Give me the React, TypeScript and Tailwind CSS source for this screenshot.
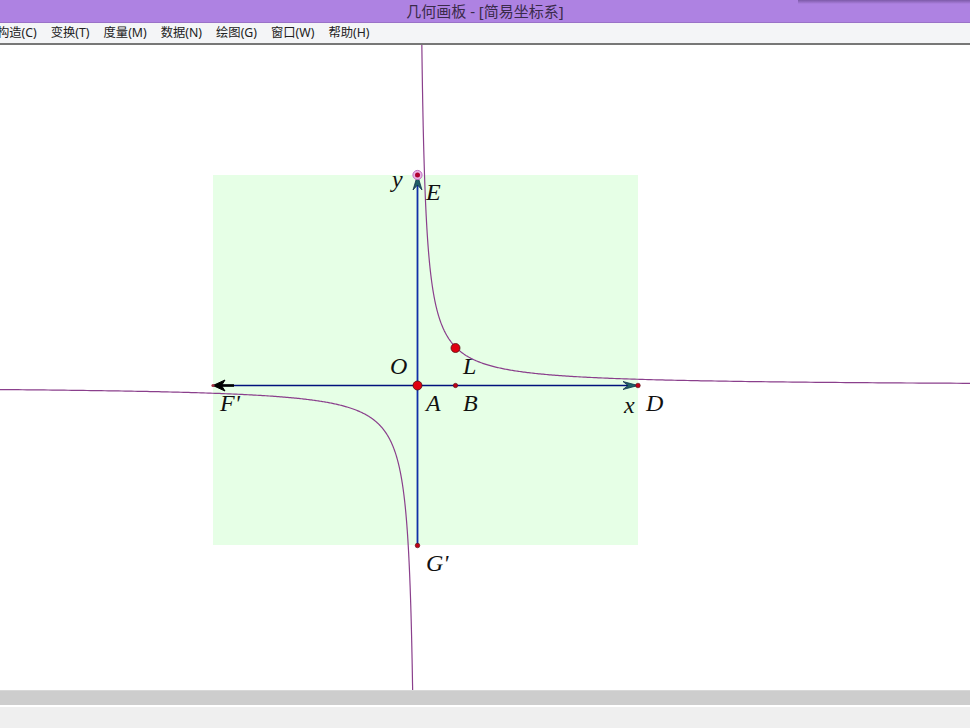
import React from 'react'

const menus = ['变换(T)', '度量(M)', '数据(N)', '绘图(G)', '窗口(W)', '帮助(H)']

// hyperbola (x - 417.5)(386 - y) = 1480, one path for each branch
function branch(from: number, to: number) {
  const pts: string[] = []
  const steps = 400
  for (let i = 0; i <= steps; i++) {
    const t = i / steps
    const dx = from * Math.pow(to / from, t)
    pts.push(`${(417.5 + dx).toFixed(2)},${(386 - 1480 / dx).toFixed(2)}`)
  }
  return 'M' + pts.join(' L')
}

const labels = [
  { text: 'y', className: 'left-[392px] top-[120px]' },
  { text: 'E', className: 'left-[426px] top-[133px]' },
  { text: 'O', className: 'left-[390px] top-[307px]' },
  { text: 'L', className: 'left-[463px] top-[307px]' },
  { text: 'A', className: 'left-[426px] top-[344px]' },
  { text: 'B', className: 'left-[463px] top-[344px]' },
  { text: 'x', className: 'left-[624px] top-[346px]' },
  { text: 'D', className: 'left-[646px] top-[344px]' },
  { text: "F'", className: 'left-[220px] top-[344px]' },
  { text: "G'", className: 'left-[426px] top-[504px]' },
]

function Sketch() {
  return (
    <svg className="absolute inset-0 h-[645px] w-[970px]" viewBox="0 45 970 645">
      <rect x="213" y="175" width="425" height="370" fill="#e6ffe6" />
      <path d={branch(4.3, 552.5)} fill="none" stroke="#8a3f8c" strokeWidth="1.2" />
      <path d={branch(-417.5, -4.87)} fill="none" stroke="#8a3f8c" strokeWidth="1.2" />
      {/* axes */}
      <path d="M213 385.5H638" stroke="#00107c" strokeWidth="1.5" />
      <path d="M417.5 175V545" stroke="#1030a8" strokeWidth="1.8" />
      {/* arrow heads */}
      <path d="M638 385.5L623 381.5L628 385.5L623 389.5Z" fill="#1f5f66" stroke="#10304a" strokeWidth="0.8" />
      <path d="M417.5 175L413 190L417.5 185L422 190Z" fill="#1f5f66" stroke="#10304a" strokeWidth="0.8" />
      <path d="M234 385.5H222" stroke="#000" strokeWidth="2.6" />
      <path d="M213 385.5L225 380L221.5 385.5L225 391Z" fill="#000" stroke="#000" strokeWidth="1" />
      {/* points */}
      <circle cx="417.5" cy="175" r="4.6" fill="#eab4e6" stroke="#c070c0" strokeWidth="1" />
      <circle cx="417.5" cy="175" r="2.5" fill="#b00030" />
      <circle cx="213" cy="385.5" r="1.6" fill="#a03040" />
      <circle cx="638" cy="385.5" r="2.3" fill="#c00018" stroke="#501010" strokeWidth="0.6" />
      <circle cx="417.5" cy="545.5" r="2.3" fill="#c00018" stroke="#501010" strokeWidth="0.6" />
      <circle cx="455.5" cy="385.5" r="2.2" fill="#c00018" stroke="#501010" strokeWidth="0.6" />
      <circle cx="417.5" cy="385.5" r="4.5" fill="#e00010" stroke="#501010" strokeWidth="0.8" />
      <circle cx="455.5" cy="348" r="4.5" fill="#e00010" stroke="#501010" strokeWidth="0.8" />
    </svg>
  )
}

export default function App() {
  return (
    <div className="flex h-[728px] w-[970px] flex-col overflow-hidden bg-white font-['Noto_Sans','Noto_Sans_CJK_SC',sans-serif]">
      {/* Title bar */}
      <div className="relative flex h-[23px] shrink-0 items-center justify-center border-b border-[#9a72c8] bg-[#ae82e2] text-[15px] text-[#3a2a4a]">
        几何画板 - [简易坐标系]
        <div className="absolute right-0 top-0 h-[4px] w-[172px] bg-gradient-to-b from-[#7d5aa8] to-[#ae82e2]" />
      </div>

      {/* Menu bar */}
      <div className="flex h-[22px] shrink-0 items-center gap-[14px] overflow-hidden border-b-2 border-[#777] bg-[#f4f5f7] text-[12.3px] text-[#222]">
        <span className="-ml-[3px] whitespace-nowrap">构造(C)</span>
        {menus.map((m) => (
          <span key={m} className="whitespace-nowrap">{m}</span>
        ))}
      </div>

      {/* Canvas */}
      <div className="relative h-[645px] shrink-0 bg-white">
        <Sketch />
        {labels.map((l) => (
          <span
            key={l.text}
            className={`absolute font-['Liberation_Serif',serif] text-[24px] italic leading-[28px] text-[#111] ${l.className}`}
          >
            {l.text}
          </span>
        ))}
      </div>

      {/* Scroll bar */}
      <div className="h-[15px] shrink-0 border-t border-[#d8d8d8] bg-[#cdcdcd]" />

      {/* Status bar */}
      <div className="flex-1 border-t-2 border-white bg-[#efefef]" />
    </div>
  )
}
